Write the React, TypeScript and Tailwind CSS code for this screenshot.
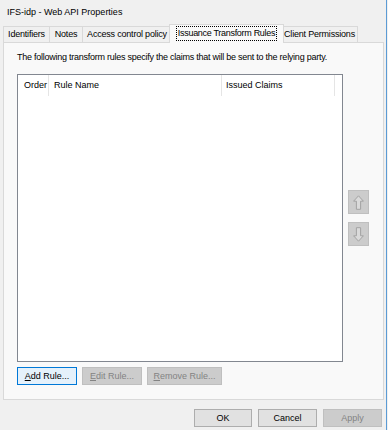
import React from 'react';

const font = { fontFamily: '"Liberation Sans", Arial, sans-serif' };

const ArrowIcon: React.FC<{ down?: boolean }> = ({ down }) => (
    <svg width="11" height="15" viewBox="0 0 11 15" className={down ? 'rotate-180' : ''}>
        <path d="M5.5 0.8 L10.4 6.2 L7.6 6.2 L7.6 14.3 L3.4 14.3 L3.4 6.2 L0.6 6.2 Z" fill="#dadada" stroke="#a3a3a3" strokeWidth="1" />
    </svg>
);

const Btn: React.FC<{ label: string; accel?: string; w: string; kind?: 'default' | 'normal' | 'disabled' }> = ({ label, accel, w, kind = 'normal' }) => {
    const cls =
        kind === 'default'
            ? 'border-[#0078d7] bg-[#e5f1fb] text-black'
            : kind === 'disabled'
                ? 'border-[#bfbfbf] bg-[#cccccc] text-[#838383]'
                : 'border-[#adadad] bg-[#e1e1e1] text-black';
    const rest = accel ? label.slice(1) : label;
    return (
        <div className={`${w} h-[18px] border flex items-center justify-center text-[9px] leading-none ${cls}`}>
            {accel && <span className="underline underline-offset-1">{accel}</span>}
            {rest}
        </div>
    );
};

export default function App() {
    return (
        <div className="w-[388px] h-[430px] bg-[#f0f0f0] flex text-black" style={font}>
            <div className="w-[386px] flex flex-col">
                <div className="pt-[5px] pl-[7px] h-[19px] text-[9px] leading-[14px]">IFS-idp - Web API Properties</div>

                {/* tab strip */}
                <div className="mt-[5px] ml-[3px] h-[18px] flex items-end text-[9px] leading-none tracking-[-0.2px]">
                    <div className="w-[46px] h-[16px] border-l border-t border-[#d9d9d9] flex items-center justify-center">Identifiers</div>
                    <div className="w-[33px] h-[16px] border-l border-t border-[#d9d9d9] flex items-center justify-center">Notes</div>
                    <div className="w-[89px] h-[16px] border-l border-t border-[#d9d9d9] flex items-center justify-center">Access control policy</div>
                    <div className="relative z-10 -ml-[2px] -mb-[1px] w-[115px] h-[19px] border-l border-t border-r border-[#d9d9d9] bg-[#f9f9f9] flex items-center justify-center pb-[1px]">
                        <span className="outline-1 outline-dotted outline-black px-[1px] py-[2px] tracking-[-0.3px]">Issuance Transform Rules</span>
                    </div>
                    <div className="-ml-[2px] w-[76px] h-[16px] border-t border-r border-[#d9d9d9] flex items-center justify-center">Client Permissions</div>
                </div>

                {/* tab page */}
                <div className="ml-[3px] w-[381px] h-[358px] border border-[#d9d9d9] bg-[#f9f9f9] flex flex-col pl-[13px] text-[9px]">
                    <div className="mt-[7px] h-[14px] leading-[14px] tracking-[-0.25px]">The following transform rules specify the claims that will be sent to the relying party.</div>
                    <div className="mt-[10px] flex">
                        <div className="w-[326px] h-[288px] border border-[#828790] bg-white">
                            <div className="h-[21px] flex items-center leading-none">
                                <div className="w-[31px] h-full pl-[6px] flex items-center border-r border-[#e5e5e5]">Order</div>
                                <div className="w-[173px] h-full pl-[5px] flex items-center border-r border-[#e5e5e5]">Rule Name</div>
                                <div className="w-[113px] h-full pl-[4px] flex items-center border-r border-[#e5e5e5]">Issued Claims</div>
                            </div>
                        </div>
                        <div className="ml-[5px] pt-[116px] flex flex-col gap-[8px]">
                            <div className="w-[21px] h-[24px] border border-[#bfbfbf] bg-[#cccccc] flex items-center justify-center">
                                <ArrowIcon />
                            </div>
                            <div className="w-[21px] h-[24px] border border-[#bfbfbf] bg-[#cccccc] flex items-center justify-center">
                                <ArrowIcon down />
                            </div>
                        </div>
                    </div>
                    <div className="mt-[5px] flex gap-[5px]">
                        <Btn label="Add Rule..." accel="A" w="w-[60px]" kind="default" />
                        <Btn label="Edit Rule..." accel="E" w="w-[60px]" kind="disabled" />
                        <Btn label="Remove Rule..." accel="R" w="w-[75px]" kind="disabled" />
                    </div>
                </div>

                <div className="mt-[9px] flex justify-end gap-[6px] pr-[4px]">
                    <Btn label="OK" w="w-[58px]" />
                    <Btn label="Cancel" w="w-[59px]" />
                    <Btn label="Apply" w="w-[59px]" kind="disabled" />
                </div>
            </div>
            <div className="w-[1px] bg-[#5b9bd5]" />
            <div className="w-[1px] bg-[#f0f0f0]" />
        </div>
    );
}
